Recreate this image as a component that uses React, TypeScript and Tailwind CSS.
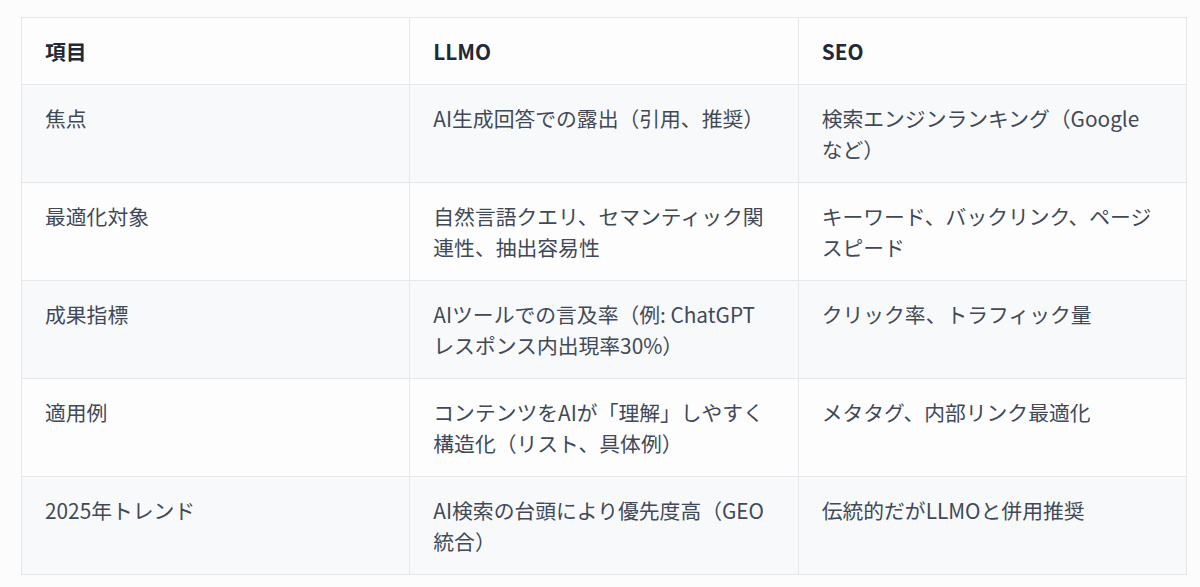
import { Fragment } from 'react'

interface Row {
  item: string
  llmo: string[]
  seo: string[]
}

// lines are split by hand so the wraps land where the design has them
const rows: Row[] = [
  {
    item: '焦点',
    llmo: ['AI生成回答での露出（引用、推奨）'],
    seo: ['検索エンジンランキング（Google', 'など）'],
  },
  {
    item: '最適化対象',
    llmo: ['自然言語クエリ、セマンティック関', '連性、抽出容易性'],
    seo: ['キーワード、バックリンク、ページ', 'スピード'],
  },
  {
    item: '成果指標',
    llmo: ['AIツールでの言及率（例: ChatGPT', 'レスポンス内出現率30%）'],
    seo: ['クリック率、トラフィック量'],
  },
  {
    item: '適用例',
    llmo: ['コンテンツをAIが「理解」しやすく', '構造化（リスト、具体例）'],
    seo: ['メタタグ、内部リンク最適化'],
  },
  {
    item: '2025年トレンド',
    llmo: ['AI検索の台頭により優先度高（GEO', '統合）'],
    seo: ['伝統的だがLLMOと併用推奨'],
  },
]

function Lines({ lines }: { lines: string[] }) {
  return (
    <>
      {lines.map((line, i) => (
        <Fragment key={i}>
          {i > 0 && <br />}
          {line}
        </Fragment>
      ))}
    </>
  )
}

export default function App() {
  const cell = 'border border-[#e5e7eb] px-[23px] pt-[18px] pb-[16px] align-top text-left'

  return (
    <div
      className="min-h-screen bg-[#fcfcfd] pl-[21px] pr-[13px] pt-[17px]"
      style={{ fontFamily: '"Noto Sans CJK JP", "Noto Sans", sans-serif' }}
    >
      <table className="w-full table-fixed border-collapse text-[20.8px] leading-[31.5px]">
        <thead>
          <tr className="bg-[#fdfdfe]">
            <th className={`${cell} font-bold text-[#1f2937]`}>項目</th>
            <th className={`${cell} font-bold text-[#1f2937]`}>LLMO</th>
            <th className={`${cell} font-bold text-[#1f2937]`}>SEO</th>
          </tr>
        </thead>
        <tbody className="text-[#414957]">
          {rows.map((row, i) => (
            <tr key={row.item} className={i % 2 === 0 ? 'bg-[#f8f9fb]' : 'bg-[#fdfdfe]'}>
              <td className={cell}>{row.item}</td>
              <td className={cell}>
                <Lines lines={row.llmo} />
              </td>
              <td className={cell}>
                <Lines lines={row.seo} />
              </td>
            </tr>
          ))}
        </tbody>
      </table>
    </div>
  )
}
